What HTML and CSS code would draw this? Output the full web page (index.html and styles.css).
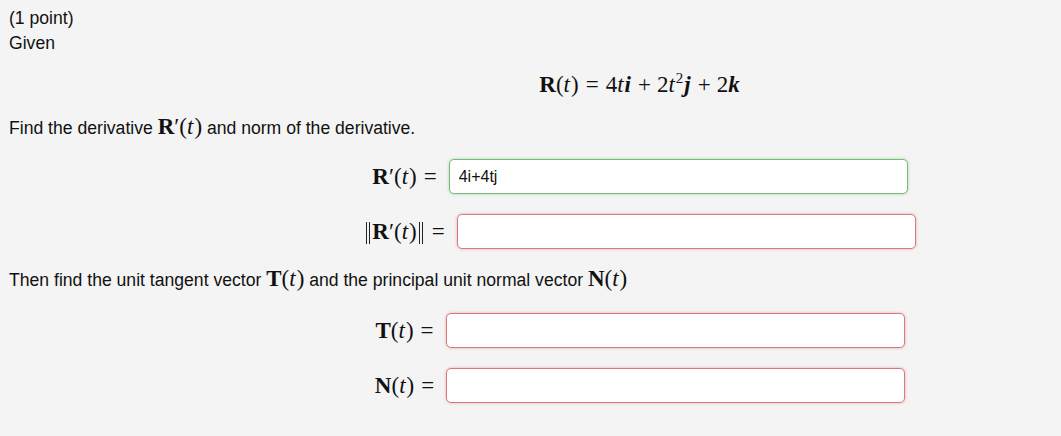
FILE: index.html
```html
<!DOCTYPE html>
<html lang="en">
<head>
  <meta charset="UTF-8" />
  <title>Problem</title>
  <link rel="stylesheet" href="styles.css">
</head>
<body>
  <div class="problem">
    <p class="line">(1 point)</p>
    <p class="line">Given</p>

    <div class="display">
      <span class="math"><b>R</b>(<i>t</i>)<span class="rel">=</span>4<i>t</i><b><i>i</i></b><span class="bin">+</span>2<i>t</i><sup>2</sup><b><i>j</i></b><span class="bin">+</span>2<b><i>k</i></b></span>
    </div>

    <p class="text first">Find the derivative <span class="math"><b>R</b>&prime;(<i>t</i>)</span> and norm of the derivative.</p>

    <div class="row">
      <span class="math label"><b>R</b>&prime;(<i>t</i>)<span class="rel">=</span></span>
      <input type="text" class="answer correct" value="4i+4tj">
    </div>
    <div class="row">
      <span class="math label"><span class="norm"></span><b>R</b>&prime;(<i>t</i>)<span class="norm"></span><span class="rel">=</span></span>
      <input type="text" class="answer wrong">
    </div>

    <p class="text second">Then find the unit tangent vector <span class="math"><b>T</b>(<i>t</i>)</span> and the principal unit normal vector <span class="math"><b>N</b>(<i>t</i>)</span></p>

    <div class="row">
      <span class="math label"><b>T</b>(<i>t</i>)<span class="rel">=</span></span>
      <input type="text" class="answer wrong">
    </div>
    <div class="row">
      <span class="math label"><b>N</b>(<i>t</i>)<span class="rel">=</span></span>
      <input type="text" class="answer wrong">
    </div>
  </div>
</body>
</html>
```

FILE: styles.css
```css
body {
  margin: 0;
  background-color: #f4f4f4;
  font-family: "Liberation Sans", Arial, sans-serif;
  font-size: 17.6px;
  color: #111;
  overflow: hidden;
}
.problem {
  padding: 6px 0 0 9px;
}
.line {
  margin: 0;
  line-height: 25px;
}
.math {
  font-family: "Liberation Serif", "Times New Roman", serif;
  font-size: 23px;
  white-space: nowrap;
}
.math i {
  padding-right: 1px;
}
.math sup {
  font-size: 15px;
  line-height: 0;
  margin-right: 1px;
}
.rel {
  margin: 0 7px;
}
.label .rel {
  margin-right: 0;
}
.bin {
  margin: 0 6px;
}
.norm {
  display: inline-block;
  width: 2px;
  height: 22px;
  border-left: 1px solid #222;
  border-right: 1px solid #222;
  vertical-align: -5px;
  margin: 0 2px;
}
.display {
  text-align: center;
  height: 40px;
  padding: 17px 0 0 210px;
  line-height: 24px;
}
.text {
  margin: 0 0 17px;
  line-height: 28px;
}
.text.second {
  margin-top: -4px;
  margin-bottom: 19px;
}
.row {
  display: flex;
  justify-content: center;
  align-items: center;
  gap: 12px;
  height: 35px;
  margin-bottom: 20px;
  padding-left: 210px;
}
.answer {
  width: 459px;
  height: 35px;
  box-sizing: border-box;
  padding: 4px 9px;
  border-radius: 5px;
  background: #fff;
  font-family: "Liberation Sans", Arial, sans-serif;
  font-size: 16px;
  color: #111;
  outline: none;
}
.correct {
  border: 1px solid #78bb78;
  box-shadow: 0 0 3px rgba(92, 184, 92, 0.5);
}
.wrong {
  border: 1px solid #d97a7a;
  box-shadow: 0 0 3px rgba(217, 83, 79, 0.45);
}
```
